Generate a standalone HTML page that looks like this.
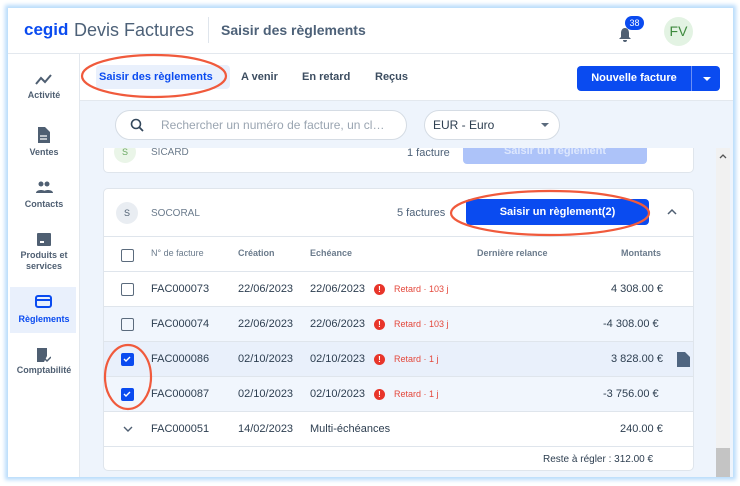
<!DOCTYPE html>
<html><head><meta charset="utf-8"><style>
*{box-sizing:border-box;margin:0;padding:0}
body{width:740px;height:486px;background:#fff;font-family:"Liberation Sans",sans-serif;position:relative;overflow:hidden;color:#33475b}
.frame{position:absolute;left:8px;top:8px;width:725px;height:469px;background:#fff;box-shadow:0 0 4px 3px #b9dcfb;overflow:hidden}
.abs{position:absolute}
.hdr{left:0;top:0;width:725px;height:46px;border-bottom:1px solid #e3e8ee;background:#fff}
.side{left:0;top:46px;width:72px;height:423px;border-right:1px solid #e3e8ee;background:#fff}
.si{position:absolute;left:0;width:72px;text-align:center;font-size:9px;font-weight:bold;color:#4f5f72}
.tabs{left:72px;top:46px;width:653px;height:47px;background:#fff;border-bottom:1px solid #e3e8ee}
.content{left:72px;top:93px;width:653px;height:376px;background:#eef4fc}
.card{background:#fff;border:1px solid #dfe5ec;border-radius:5px;position:absolute}
.row{position:absolute;left:0;width:589px;height:35px;border-top:1px solid #dfe5ec;font-size:11px;color:#2d3e50}
.row span{position:absolute;top:11px}
.cb{position:absolute;left:17px;top:11px;width:13px;height:13px;border:1.5px solid #5b6b7d;border-radius:2px}
.cbc{background:#0a4bf0;border-color:#0a4bf0}
.ret{color:#e4483c;font-size:9px}
.ex{position:absolute;width:11px;height:11px;border-radius:50%;background:#e8352a;color:#fff;font-size:8px;font-weight:bold;text-align:center;line-height:11px}
</style></head><body>
<div class="frame">
<div class="abs hdr">
 <div class="abs" style="left:16px;top:12px;font-size:17px;font-weight:bold;color:#0a4bf0">cegid</div>
 <div class="abs" style="left:66px;top:12px;font-size:18px;color:#4d6178">Devis Factures</div>
 <div class="abs" style="left:200px;top:9px;width:1px;height:26px;background:#dfe5ec"></div>
 <div class="abs" style="left:213px;top:14px;font-size:14px;font-weight:bold;color:#4d6178">Saisir des règlements</div>
 <svg class="abs" style="left:610px;top:19px" width="14" height="16" viewBox="0 0 14 16"><path d="M7 1C4 1 3 4 3 6v4L1 12h12l-2-2V6c0-2-1-5-4-5zM5 13a2 2 0 004 0z" fill="#4f5f72"/></svg>
 <div class="abs" style="left:617px;top:8px;width:19px;height:14px;border-radius:7px;background:#0a4bf0;color:#fff;font-size:9px;text-align:center;line-height:14px">38</div>
 <div class="abs" style="left:656px;top:9px;width:29px;height:29px;border-radius:50%;background:#e3f3e3;color:#3e8a3e;font-size:14px;text-align:center;line-height:29px">FV</div>
</div>
<div class="abs side">
 <svg class="abs" style="left:27px;top:20px" width="18" height="12" viewBox="0 0 18 12"><path d="M1 10l5-6 4 4 6-7" stroke="#4f5f72" stroke-width="2" fill="none"/></svg>
 <div class="si" style="top:36px">Activité</div>
 <svg class="abs" style="left:29px;top:73px" width="13" height="16" viewBox="0 0 13 16"><path d="M1 0h7l5 5v11H1z" fill="#4f5f72"/><path d="M3 9h7M3 12h7" stroke="#fff" stroke-width="1.3"/></svg>
 <div class="si" style="top:93px">Ventes</div>
 <svg class="abs" style="left:27px;top:127px" width="18" height="12" viewBox="0 0 18 12"><circle cx="6" cy="3" r="2.5" fill="#4f5f72"/><circle cx="12" cy="3" r="2.5" fill="#4f5f72"/><path d="M1 12c0-4 10-4 10 0zM8 12c0-4 10-4 10 0z" fill="#4f5f72"/></svg>
 <div class="si" style="top:145px">Contacts</div>
 <svg class="abs" style="left:29px;top:179px" width="14" height="13" viewBox="0 0 14 13"><rect width="14" height="13" rx="1" fill="#4f5f72"/><rect x="3" y="8" width="4" height="2" fill="#fff"/></svg>
 <div class="si" style="top:196px;line-height:11px">Produits et<br>services</div>
 <div class="abs" style="left:2px;top:233px;width:66px;height:46px;background:#e9f0fc"></div>
 <svg class="abs" style="left:27px;top:241px" width="17" height="13" viewBox="0 0 17 13"><rect x="1" y="1" width="15" height="11" rx="2" stroke="#0a4bf0" stroke-width="2" fill="none"/><path d="M1 5h15" stroke="#0a4bf0" stroke-width="2"/></svg>
 <div class="si" style="top:260px;color:#0a4bf0">Règlements</div>
 <svg class="abs" style="left:29px;top:293px" width="14" height="16" viewBox="0 0 14 16"><path d="M0 1h10v8l-3 6H0z" fill="#4f5f72"/><path d="M8 12l2 2 4-4" stroke="#4f5f72" stroke-width="1.5" fill="none"/></svg>
 <div class="si" style="top:311px">Comptabilité</div>
</div>
<div class="abs tabs">
 <div class="abs" style="left:16px;top:11px;width:134px;height:24px;border-radius:4px;background:#e9f0fc"></div>
 <div class="abs" style="left:19px;top:17px;font-size:11px;font-weight:bold;color:#0a4bf0">Saisir des règlements</div>
 <div class="abs" style="left:161px;top:17px;font-size:11px;font-weight:bold;color:#3c4d60">A venir</div>
 <div class="abs" style="left:222px;top:17px;font-size:11px;font-weight:bold;color:#3c4d60">En retard</div>
 <div class="abs" style="left:295px;top:17px;font-size:11px;font-weight:bold;color:#3c4d60">Reçus</div>
 <div class="abs" style="left:497px;top:12px;width:143px;height:25px;border-radius:4px;background:#0a4bf0"></div>
 <div class="abs" style="left:497px;top:12px;width:115px;height:25px;color:#fff;font-size:11px;font-weight:bold;text-align:center;line-height:25px;border-right:1px solid #6b8ff5">Nouvelle facture</div>
 <div class="abs" style="left:623px;top:23px;width:0;height:0;border-left:4px solid transparent;border-right:4px solid transparent;border-top:4px solid #fff"></div>
</div>
<div class="abs content">
 <div class="abs" style="left:35px;top:9px;width:292px;height:30px;border:1px solid #d5dce4;border-radius:15px;background:#fff"></div>
 <svg class="abs" style="left:50px;top:17px" width="14" height="14" viewBox="0 0 14 14"><circle cx="6" cy="6" r="4.5" stroke="#33475b" stroke-width="1.6" fill="none"/><path d="M9.5 9.5l3.5 3.5" stroke="#33475b" stroke-width="1.8"/></svg>
 <div class="abs" style="left:81px;top:17px;font-size:12px;color:#9aa5b1;white-space:nowrap;width:222px;overflow:hidden">Rechercher un numéro de facture, un cl…</div>
 <div class="abs" style="left:344px;top:9px;width:136px;height:30px;border:1px solid #d5dce4;border-radius:15px;background:#fff"></div>
 <div class="abs" style="left:353px;top:17px;font-size:12px;color:#2d3e50">EUR - Euro</div>
 <div class="abs" style="left:461px;top:22px;border-left:4px solid transparent;border-right:4px solid transparent;border-top:4px solid #5b6b7d"></div>
 <div class="abs" style="left:0;top:47px;width:653px;height:329px;overflow:hidden">
  <div class="card" style="left:23px;top:-30px;width:591px;height:55px">
   <div class="abs" style="left:10px;top:22px;width:22px;height:22px;border-radius:50%;background:#eaf5e8;color:#6aa862;font-size:9px;text-align:center;line-height:22px">S</div>
   <div class="abs" style="left:47px;top:28px;font-size:10px;color:#6b7b8c">SICARD</div>
   <div class="abs" style="left:303px;top:28px;font-size:11px;color:#4d6178">1 facture</div>
   <div class="abs" style="left:359px;top:20px;width:184px;height:25px;border-radius:4px;background:#adc3f9;color:#dde7fd;font-size:11px;font-weight:bold;text-align:center;line-height:25px">Saisir un règlement</div>
  </div>
  <div class="card" style="left:23px;top:40px;width:591px;height:283px">
   <div class="abs" style="left:12px;top:13px;width:22px;height:22px;border-radius:50%;background:#e9edf2;color:#4f5f72;font-size:9px;text-align:center;line-height:22px">S</div>
   <div class="abs" style="left:47px;top:19px;font-size:10px;color:#6b7b8c">SOCORAL</div>
   <div class="abs" style="left:293px;top:18px;font-size:11px;color:#4d6178">5 factures</div>
   <div class="abs" style="left:362px;top:10px;width:183px;height:26px;border-radius:4px;background:#0a4bf0;color:#fff;font-size:11px;font-weight:bold;text-align:center;line-height:26px">Saisir un règlement(2)</div>
   <svg class="abs" style="left:563px;top:19px" width="10" height="7" viewBox="0 0 10 7"><path d="M1 6l4-4 4 4" stroke="#4f5f72" stroke-width="1.5" fill="none"/></svg>
   <div class="row" style="top:47px;height:35px;font-size:9px;color:#6b7b8c;font-weight:bold">
    <div class="cb" style="top:12px"></div>
    <span style="left:47px;font-weight:normal">N° de facture</span><span style="left:134px">Création</span><span style="left:206px">Echéance</span><span style="left:373px">Dernière relance</span><span style="left:517px">Montants</span>
   </div>
   <div class="row" style="top:82px"><div class="cb"></div><span style="left:47px">FAC000073</span><span style="left:134px">22/06/2023</span><span style="left:206px">22/06/2023</span><div class="ex" style="left:270px;top:12px">!</div><span class="ret" style="left:290px;top:12px">Retard · 103 j</span><span style="left:507px">4 308.00 €</span></div>
   <div class="row" style="top:117px;background:#f1f6fd"><div class="cb"></div><span style="left:47px">FAC000074</span><span style="left:134px">22/06/2023</span><span style="left:206px">22/06/2023</span><div class="ex" style="left:270px;top:12px">!</div><span class="ret" style="left:290px;top:12px">Retard · 103 j</span><span style="left:499px">-4 308.00 €</span></div>
   <div class="row" style="top:152px;background:#e9f0fb"><div class="cb cbc"><svg width="10" height="10" viewBox="0 0 10 10" style="position:absolute;left:0;top:0"><path d="M2 5l2 2 4-4" stroke="#fff" stroke-width="1.4" fill="none"/></svg></div><span style="left:47px">FAC000086</span><span style="left:134px">02/10/2023</span><span style="left:206px">02/10/2023</span><div class="ex" style="left:270px;top:12px">!</div><span class="ret" style="left:290px;top:12px">Retard · 1 j</span><span style="left:507px">3 828.00 €</span>
    <svg class="abs" style="left:573px;top:10px" width="13" height="15" viewBox="0 0 13 15"><path d="M0 0h8l5 5v10H0z" fill="#4f6580"/></svg></div>
   <div class="row" style="top:187px;background:#f1f6fd"><div class="cb cbc"><svg width="10" height="10" viewBox="0 0 10 10" style="position:absolute;left:0;top:0"><path d="M2 5l2 2 4-4" stroke="#fff" stroke-width="1.4" fill="none"/></svg></div><span style="left:47px">FAC000087</span><span style="left:134px">02/10/2023</span><span style="left:206px">02/10/2023</span><div class="ex" style="left:270px;top:12px">!</div><span class="ret" style="left:290px;top:12px">Retard · 1 j</span><span style="left:499px">-3 756.00 €</span></div>
   <div class="row" style="top:222px"><svg class="abs" style="left:19px;top:14px" width="10" height="7" viewBox="0 0 10 7"><path d="M1 1l4 4 4-4" stroke="#4f5f72" stroke-width="1.4" fill="none"/></svg><span style="left:47px">FAC000051</span><span style="left:134px">14/02/2023</span><span style="left:206px">Multi-échéances</span><span style="left:516px">240.00 €</span></div>
   <div class="row" style="top:257px;height:26px"><span style="left:439px;top:7px;font-size:10px">Reste à régler : 312.00 €</span></div>
  </div>
 </div>
 <div class="abs" style="left:636px;top:47px;width:14px;height:329px;background:#f1f1f1"></div>
 <svg class="abs" style="left:639px;top:52px" width="8" height="6" viewBox="0 0 8 6"><path d="M1 5l3-3 3 3" stroke="#555" stroke-width="1.3" fill="none"/></svg>
 <div class="abs" style="left:636px;top:347px;width:14px;height:29px;background:#c4c4c4"></div>
</div>
<svg class="abs" style="left:0;top:0" width="725" height="469"><g fill="none" stroke="#f05a3c" stroke-width="2.2">
<ellipse cx="146" cy="68" rx="72" ry="21"/>
<ellipse cx="542" cy="205" rx="99" ry="22"/>
<ellipse cx="120" cy="369" rx="23" ry="32"/></g></svg>
</div>
</body></html>
